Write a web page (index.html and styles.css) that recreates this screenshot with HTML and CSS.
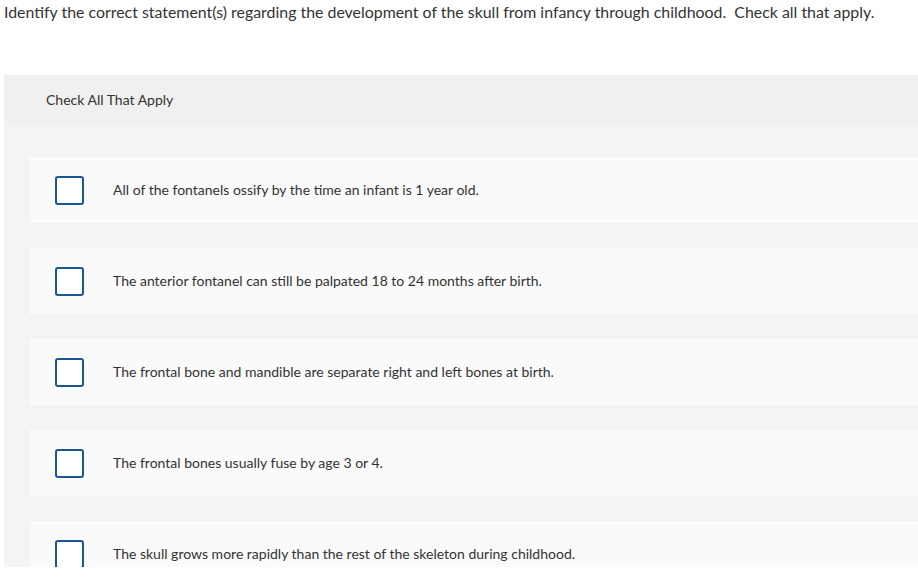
FILE: index.html
```html
<!DOCTYPE html>
<html>
<head>
<meta charset="utf-8">
<link rel="stylesheet" href="styles.css">
</head>
<body>
<div class="page">
  <p class="prompt">Identify the correct statement(s) regarding the development of the skull from infancy through childhood.&nbsp; Check all that apply.</p>
  <div class="panel">
    <div class="panel-head">Check All That Apply</div>
    <div class="options">
      <label class="option"><span class="box"></span><span class="text">All of the fontanels ossify by the time an infant is 1 year old.</span></label>
      <label class="option"><span class="box"></span><span class="text">The anterior fontanel can still be palpated 18 to 24 months after birth.</span></label>
      <label class="option"><span class="box"></span><span class="text">The frontal bone and mandible are separate right and left bones at birth.</span></label>
      <label class="option"><span class="box"></span><span class="text">The frontal bones usually fuse by age 3 or 4.</span></label>
      <label class="option"><span class="box"></span><span class="text">The skull grows more rapidly than the rest of the skeleton during childhood.</span></label>
    </div>
  </div>
</div>
</body>
</html>
```
FILE: styles.css
```css
html, body {
  margin: 0;
  padding: 0;
  background: #fff;
}
body {
  font-family: Lato, "Liberation Sans", sans-serif;
  color: #333;
}
.page {
  height: 567px;
  overflow: hidden;
}
.prompt {
  margin: 0;
  padding: 2px 0 0 4px;
  font-size: 15.9px;
  line-height: 20px;
  white-space: nowrap;
}
.panel {
  margin: 53px 0 0 4px;
}
.panel-head {
  background: #f0f0f0;
  height: 50px;
  box-sizing: border-box;
  padding: 0 0 2px 42px;
  display: flex;
  align-items: center;
  font-size: 14px;
}
.options {
  background: #f4f4f4;
  padding: 32px 0 0 26px;
  display: flex;
  flex-direction: column;
  gap: 25px;
}
.option {
  background: #fafafa;
  height: 66px;
  display: flex;
  align-items: center;
  padding-left: 25px;
  font-size: 14px;
}
.box {
  width: 25px;
  height: 25px;
  border: 2px solid #1b5594;
  border-radius: 3px;
  background: #fff;
  flex: none;
}
.text {
  margin-left: 29px;
  padding-bottom: 2px;
}
```
